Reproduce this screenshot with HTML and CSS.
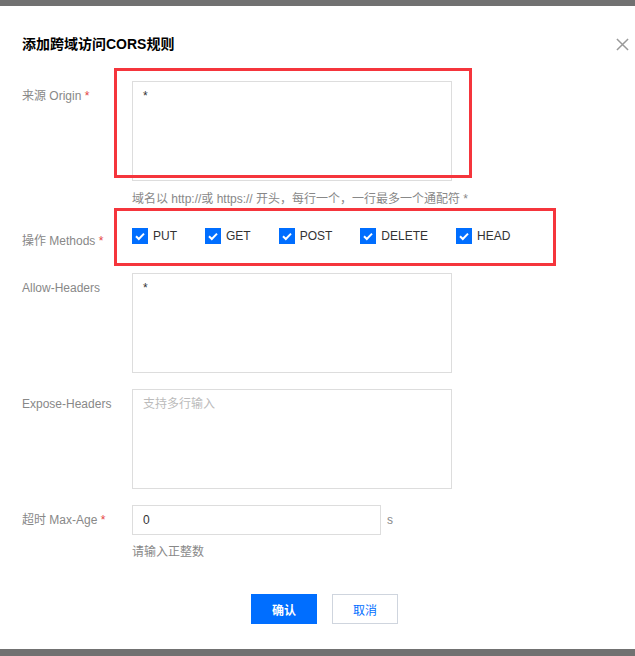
FILE: index.html
```html
<!DOCTYPE html>
<html lang="zh-CN">
  <head>
    <meta charset="utf-8">
    <title>添加跨域访问CORS规则</title>
    <link rel="stylesheet" href="styles.css">
  </head>
  <body>
    <div class="dialog">
      <div class="dialog-head">
        <h3 class="dialog-title">添加跨域访问CORS规则</h3>
        <button class="close" type="button" aria-label="关闭">
          <svg width="14" height="14" viewBox="0 0 14 14">
            <path d="M1 1 L13 13 M13 1 L1 13" stroke="#999" stroke-width="1.6" fill="none"/>
          </svg>
        </button>
      </div>

      <form class="form">
        <div class="row row-origin">
          <label class="label">来源 Origin <em>*</em></label>
          <div class="field">
            <textarea class="area">*</textarea>
            <span class="mark mark-origin"></span>
            <p class="help help-origin">域名以 http://或 https:// 开头，每行一个，一行最多一个通配符 *</p>
          </div>
        </div>

        <div class="row row-methods">
          <label class="label">操作 Methods <em>*</em></label>
          <div class="field checks">
            <label class="check"><span class="box"><svg width="16" height="16" viewBox="0 0 16 16"><path d="M4 8.2 L6.8 11 L12 5.6" stroke="#fff" stroke-width="2" fill="none"/></svg></span>PUT</label>
            <label class="check"><span class="box"><svg width="16" height="16" viewBox="0 0 16 16"><path d="M4 8.2 L6.8 11 L12 5.6" stroke="#fff" stroke-width="2" fill="none"/></svg></span>GET</label>
            <label class="check"><span class="box"><svg width="16" height="16" viewBox="0 0 16 16"><path d="M4 8.2 L6.8 11 L12 5.6" stroke="#fff" stroke-width="2" fill="none"/></svg></span>POST</label>
            <label class="check"><span class="box"><svg width="16" height="16" viewBox="0 0 16 16"><path d="M4 8.2 L6.8 11 L12 5.6" stroke="#fff" stroke-width="2" fill="none"/></svg></span>DELETE</label>
            <label class="check"><span class="box"><svg width="16" height="16" viewBox="0 0 16 16"><path d="M4 8.2 L6.8 11 L12 5.6" stroke="#fff" stroke-width="2" fill="none"/></svg></span>HEAD</label>
            <span class="mark mark-methods"></span>
          </div>
        </div>

        <div class="row">
          <label class="label">Allow-Headers</label>
          <div class="field">
            <textarea class="area">*</textarea>
          </div>
        </div>

        <div class="row">
          <label class="label">Expose-Headers</label>
          <div class="field">
            <textarea class="area" placeholder="支持多行输入"></textarea>
          </div>
        </div>

        <div class="row row-age">
          <label class="label">超时 Max-Age <em>*</em></label>
          <div class="field">
            <div class="age">
              <input class="input" type="text" value="0">
              <span class="unit">s</span>
            </div>
            <p class="help help-age">请输入正整数</p>
          </div>
        </div>

        <div class="footer">
          <button class="btn btn-primary" type="button">确认</button>
          <button class="btn btn-weak" type="button">取消</button>
        </div>
      </form>
    </div>
  </body>
</html>
```

FILE: styles.css
```css
html, body {
  margin: 0;
  padding: 0;
}

body {
  background: #717171;
  font-family: "Liberation Sans", "Noto Sans CJK SC", sans-serif;
  font-size: 12px;
  color: #333;
  width: 635px;
  height: 656px;
  overflow: hidden;
}

.dialog {
  margin-top: 6px;
  height: 643px;
  background: #fff;
  padding: 0 22px;
  box-sizing: border-box;
}

.dialog-head {
  display: flex;
  align-items: center;
  justify-content: space-between;
  padding-top: 28px;
}

.dialog-title {
  margin: 0;
  font-size: 14px;
  line-height: 20px;
  font-weight: bold;
  color: #000;
}

.close {
  border: 0;
  background: none;
  padding: 0;
  margin-right: -16px;
  width: 13px;
  height: 13px;
  display: flex;
}

.close svg {
  width: 13px;
  height: 13px;
}

.form {
  margin-top: 27px;
}

.row {
  display: flex;
  margin-bottom: 16px;
}

.label {
  width: 110px;
  flex: none;
  padding-top: 6px;
  line-height: 18px;
  color: #888;
}

.label em {
  font-style: normal;
  color: #e54545;
}

.field {
  position: relative;
}

.area {
  display: block;
  width: 320px;
  height: 100px;
  box-sizing: border-box;
  border: 1px solid #ddd;
  padding: 5px 10px;
  margin: 0;
  resize: none;
  font-family: "Liberation Sans", "Noto Sans CJK SC", sans-serif;
  font-size: 12px;
  line-height: 18px;
  color: #333;
}

.area::placeholder {
  color: #bbb;
}

.help {
  margin: 0;
  line-height: 18px;
  color: #888;
}

.help-origin {
  margin-top: 9px;
  margin-bottom: 2px;
}

.checks {
  display: flex;
  align-items: center;
  height: 20px;
  padding-bottom: 11px;
  margin-bottom: 16px;
}

.row-methods {
  margin-bottom: 0;
}

.check {
  display: flex;
  align-items: center;
  margin-right: 28px;
  color: #333;
  line-height: 20px;
}

.box {
  width: 16px;
  height: 16px;
  background: #006eff;
  margin-right: 5px;
  display: flex;
}

.mark {
  position: absolute;
  border: 3px solid #f5353c;
  box-sizing: border-box;
}

.mark-origin {
  left: -18px;
  top: -13px;
  width: 358px;
  height: 110px;
}

.mark-methods {
  left: -18px;
  top: -18px;
  width: 442px;
  height: 58px;
}

.age {
  display: flex;
  align-items: center;
}

.input {
  width: 249px;
  height: 30px;
  box-sizing: border-box;
  border: 1px solid #ddd;
  padding: 0 10px;
  margin: 0;
  font-family: "Liberation Sans", "Noto Sans CJK SC", sans-serif;
  font-size: 12px;
  color: #333;
}

.unit {
  margin-left: 6px;
  color: #888;
}

.help-age {
  margin-top: 8px;
}

.row-age {
  margin-bottom: 0;
}

.footer {
  display: flex;
  justify-content: center;
  gap: 15px;
  padding-left: 14px;
  margin-top: 33px;
}

.btn {
  width: 66px;
  height: 30px;
  box-sizing: border-box;
  font-family: "Liberation Sans", "Noto Sans CJK SC", sans-serif;
  font-size: 12px;
  font-weight: bold;
  padding: 0;
}

.btn-primary {
  background: #006eff;
  border: 1px solid #006eff;
  color: #fff;
}

.btn-weak {
  background: #fff;
  border: 1px solid #cfd5de;
  color: #006eff;
  font-weight: normal;
}
```
